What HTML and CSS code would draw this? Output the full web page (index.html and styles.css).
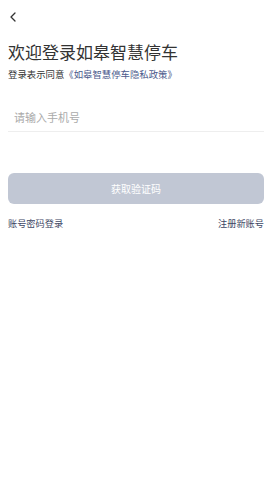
FILE: index.html
```html
<!DOCTYPE html>
<html lang="zh-CN">

<head>
    <meta charset="UTF-8">
    <meta name="viewport" content="width=device-width, initial-scale=1.0">
    <title>登录</title>
    <link rel="stylesheet" href="styles.css">
</head>

<body>
    <div class="page">
        <div class="nav">
            <svg class="back" width="8" height="10" viewBox="0 0 8 10">
                <path d="M6 1 L2 5 L6 9" fill="none" stroke="#333" stroke-width="1.3" stroke-linecap="round" stroke-linejoin="round"/>
            </svg>
        </div>

        <h1 class="title">欢迎登录如皋智慧停车</h1>
        <p class="agree">登录表示同意<span class="policy">《如皋智慧停车隐私政策》</span></p>

        <div class="field">
            <input type="tel" placeholder="请输入手机号">
        </div>

        <button class="code-btn">获取验证码</button>

        <div class="links">
            <span>账号密码登录</span>
            <span>注册新账号</span>
        </div>
    </div>
</body>

</html>
```

FILE: styles.css
```css
body {
    margin: 0;
    background: #fff;
    font-family: "Noto Sans CJK SC", "Noto Sans", sans-serif;
    color: #333;
}

.page {
    padding: 0 6px 0 8px;
}

.nav {
    height: 34px;
    display: flex;
    align-items: center;
}

.back {
    display: block;
    margin-left: 1px;
}

.title {
    margin: 6px 0 0;
    font-size: 17px;
    font-weight: normal;
    line-height: 24px;
    color: #333;
}

.agree {
    margin: 4px 0 0;
    font-size: 9.4px;
    line-height: 13px;
    color: #333;
}

.policy {
    color: #4b5a8c;
}

.field {
    margin-top: 22px;
    border-bottom: 1px solid #eee;
}

.field input {
    width: 100%;
    box-sizing: border-box;
    border: none;
    outline: none;
    padding: 0 0 0 6px;
    height: 28px;
    font-family: inherit;
    font-size: 11px;
    color: #333;
    background: transparent;
}

.field input::placeholder {
    color: #aaa;
}

.code-btn {
    display: block;
    width: 100%;
    height: 31px;
    margin-top: 41px;
    border: none;
    border-radius: 6px;
    background: #c1c7d4;
    color: #fff;
    font-family: inherit;
    font-size: 10px;
}

.links {
    display: flex;
    justify-content: space-between;
    margin-top: 12px;
    font-size: 9.2px;
    line-height: 14px;
    color: #3c4663;
}
```
